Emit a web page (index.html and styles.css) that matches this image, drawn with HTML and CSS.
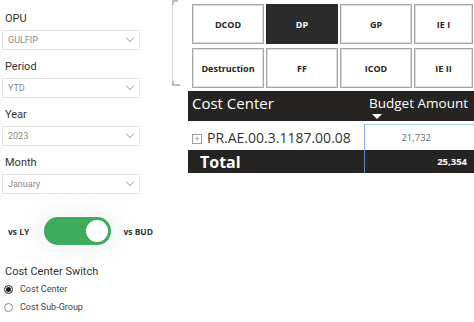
FILE: index.html
```html
<!DOCTYPE html>
<html lang="en">
<head>
    <meta charset="UTF-8">
    <meta name="viewport" content="width=device-width, initial-scale=1.0">
    <title>Cost Center Budget</title>
    <link rel="stylesheet" href="styles.css">
</head>
<body>
    <div class="page">
        <div class="filters">
            <div class="slicer">
                <div class="slicer-label">OPU</div>
                <div class="dropdown"><span>GULFIP</span><span class="chevron"></span></div>
            </div>
            <div class="slicer">
                <div class="slicer-label">Period</div>
                <div class="dropdown"><span>YTD</span><span class="chevron"></span></div>
            </div>
            <div class="slicer">
                <div class="slicer-label">Year</div>
                <div class="dropdown"><span>2023</span><span class="chevron"></span></div>
            </div>
            <div class="slicer">
                <div class="slicer-label">Month</div>
                <div class="dropdown"><span>January</span><span class="chevron"></span></div>
            </div>

            <div class="toggle-row">
                <span class="toggle-text">vs LY</span>
                <div class="toggle"><div class="knob"></div></div>
                <span class="toggle-text">vs BUD</span>
            </div>

            <div class="switch-title">Cost Center Switch</div>
            <div class="radio-row"><span class="radio checked"></span>Cost Center</div>
            <div class="radio-row"><span class="radio"></span>Cost Sub-Group</div>
        </div>

        <div class="main">
            <div class="frame">
                <div class="buttons">
                    <div class="btn">DCOD</div>
                    <div class="btn active">DP</div>
                    <div class="btn">GP</div>
                    <div class="btn">IE I</div>
                    <div class="btn">Destruction</div>
                    <div class="btn">FF</div>
                    <div class="btn">ICOD</div>
                    <div class="btn">IE II</div>
                </div>
            </div>

            <table class="grid">
                <colgroup>
                    <col class="name-col">
                    <col>
                </colgroup>
                <tr>
                    <th class="col-name">Cost Center</th>
                    <th class="col-amount"><span class="sorted">Budget Amount</span></th>
                </tr>
                <tr class="row">
                    <td class="col-name"><span class="expand">+</span>PR.AE.00.3.1187.00.08</td>
                    <td class="col-amount value">21,732</td>
                </tr>
                <tr class="total">
                    <td class="col-name">Total</td>
                    <td class="col-amount">25,354</td>
                </tr>
            </table>
        </div>
    </div>
</body>
</html>
```

FILE: styles.css
```css
body {
    margin: 0;
    font-family: "Open Sans", "Noto Sans", sans-serif;
    background-color: #ffffff;
    color: #252423;
}
.page {
    display: grid;
    grid-template-columns: 172px 302px;
    width: 474px;
    height: 322px;
    overflow: hidden;
}
.filters {
    padding: 11px 0 0 2px;
}
.slicer {
    margin-bottom: 9px;
}
.slicer-label {
    font-family: "Roboto", sans-serif;
    font-size: 11px;
    line-height: 16px;
    height: 16px;
    padding-left: 3px;
    margin-bottom: 3px;
    color: #333;
}
.dropdown {
    width: 138px;
    height: 20px;
    box-sizing: border-box;
    border: 1px solid #e6e6e6;
    display: flex;
    align-items: center;
    justify-content: space-between;
    padding: 0 6px 0 5px;
    font-family: "Roboto", sans-serif;
    font-size: 9px;
    color: #8a8a8a;
}
.chevron {
    width: 5px;
    height: 5px;
    border-right: 1px solid #b5b5b5;
    border-bottom: 1px solid #b5b5b5;
    transform: rotate(45deg);
    margin-top: -4px;
}
.toggle-row {
    display: flex;
    align-items: center;
    margin-top: 23px;
    height: 28px;
}
.toggle-text {
    font-family: "Open Sans", sans-serif;
    font-size: 8.5px;
    font-weight: bold;
    color: #333;
}
.toggle-row .toggle-text:first-child {
    margin-left: 6px;
}
.toggle {
    width: 67px;
    height: 28px;
    border-radius: 14px;
    background-color: #3dab5b;
    margin: 0 12px 0 15px;
    display: flex;
    align-items: center;
    justify-content: flex-end;
    padding-right: 3px;
    box-sizing: border-box;
    box-shadow: 0 0 18px 8px rgba(230, 230, 230, 0.45);
}
.knob {
    width: 22px;
    height: 22px;
    border-radius: 50%;
    background-color: #fff;
}
.switch-title {
    font-family: "Roboto", sans-serif;
    font-size: 11px;
    color: #333;
    padding-left: 3px;
    margin-top: 19px;
    line-height: 16px;
}
.radio-row {
    display: flex;
    align-items: center;
    font-family: "Roboto", sans-serif;
    font-size: 9px;
    color: #444;
    height: 18px;
    padding-left: 2px;
}
.radio {
    width: 7px;
    height: 7px;
    border: 1px solid #8a8a8a;
    border-radius: 50%;
    margin-right: 7px;
    box-sizing: content-box;
}
.radio.checked {
    background-color: #1b1b1b;
    box-shadow: inset 0 0 0 1px #fff;
    border-color: #555;
}
.frame {
    position: relative;
    height: 86px;
    border-left: 1px solid #d6d6d6;
    padding: 4px 1px 0 19px;
    box-sizing: border-box;
}
.frame::before {
    content: "";
    position: absolute;
    left: -1px;
    top: 0;
    width: 4px;
    height: 3px;
    border-left: 2px solid #bdbdbd;
    border-top: 2px solid #bdbdbd;
}
.frame::after {
    content: "";
    position: absolute;
    left: -1px;
    bottom: 0;
    width: 6px;
    height: 3px;
    border-left: 2px solid #bdbdbd;
    border-bottom: 2px solid #bdbdbd;
}
.buttons {
    display: grid;
    grid-template-columns: 72px 72px 72px 1fr;
    grid-auto-rows: 40px;
    column-gap: 2px;
    row-gap: 4px;
}
.btn {
    border: 1px solid #a6a6a6;
    box-shadow: inset 0 0 0 1px #dedede;
    display: flex;
    align-items: center;
    justify-content: center;
    font-size: 9px;
    font-weight: bold;
    color: #252423;
    background-color: #fff;
}
.btn.active {
    background-color: #2b2b2b;
    color: #fff;
    border-color: #2b2b2b;
    box-shadow: none;
}
.grid {
    margin: 5px 0 0 16px;
    width: 286px;
    border-collapse: collapse;
    table-layout: fixed;
}
.name-col {
    width: 176px;
}
.grid th {
    background-color: #252423;
    color: #fff;
    font-weight: normal;
    font-size: 13.5px;
    height: 30px;
    padding: 0;
    vertical-align: top;
    line-height: 24px;
}
.grid th.col-name {
    text-align: left;
    padding-left: 4px;
    font-size: 15px;
}
.grid th.col-amount {
    text-align: right;
    padding-right: 6px;
    white-space: nowrap;
}
.sorted {
    position: relative;
    display: inline-block;
}
.sorted::after {
    content: "";
    position: absolute;
    left: 3px;
    top: 23px;
    border-left: 5px solid transparent;
    border-right: 5px solid transparent;
    border-top: 5px solid #fff;
}
.row td {
    height: 26px;
    padding: 0;
    border-top: 3px solid #fff;
    font-size: 14px;
    color: #333;
}
.row td.col-name {
    padding-left: 4px;
    white-space: nowrap;
    overflow: hidden;
}
.row td.value {
    font-size: 9.5px;
    color: #666;
    text-align: center;
    padding-right: 6px;
    border-left: 1px solid #7fb2e5;
    box-shadow: inset 0 1px 0 #a9cbed;
    vertical-align: middle;
}
.expand {
    display: inline-block;
    width: 8px;
    height: 8px;
    border: 1px solid #9e9e9e;
    color: #888;
    font-size: 9px;
    line-height: 8px;
    text-align: center;
    margin-right: 5px;
    vertical-align: 1px;
}
.total td {
    background-color: #252423;
    color: #fff;
    font-weight: bold;
    height: 23px;
    padding: 0;
}
.total td.col-name {
    font-size: 16px;
    padding-left: 12px;
}
.total td.col-amount {
    font-size: 9.5px;
    text-align: right;
    padding-right: 7px;
    border-left: 1px solid #5b8fc4;
}
```
